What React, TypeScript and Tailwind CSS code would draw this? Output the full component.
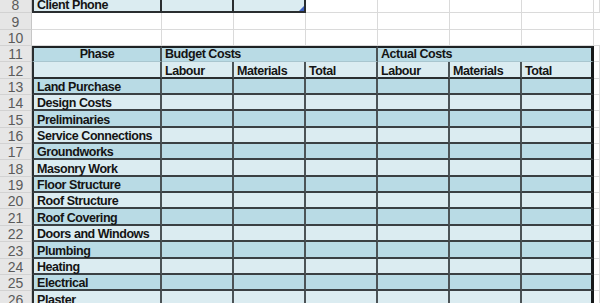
import React from "react";

const phases = [
  "Land Purchase",
  "Design Costs",
  "Preliminaries",
  "Service Connections",
  "Groundworks",
  "Masonry Work",
  "Floor Structure",
  "Roof Structure",
  "Roof Covering",
  "Doors and Windows",
  "Plumbing",
  "Heating",
  "Electrical",
  "Plaster",
];

const DARK = "bg-[#b9dbe5]";
const LIGHT = "bg-[#dbecf1]";

function RowHead({ n }: { n: number }) {
  return (
    <div className="flex w-[32px] shrink-0 items-end justify-center border-r border-b border-r-[#c6c6c6] border-b-[#d2d2d2] bg-[#e6e6e6] text-[14px] leading-[13px] font-normal tracking-normal text-[#5b5b5b]">
      {n}
    </div>
  );
}

function Blank({ w }: { w: string }) {
  return <div className={`${w} shrink-0 border-r border-b border-[#dadada] bg-white`} />;
}

function Row({ children }: { children: React.ReactNode }) {
  return <div className="flex h-[16.35px] shrink-0">{children}</div>;
}

export default function App() {
  const cols = ["w-[72px]", "w-[72px]", "w-[72px]", "w-[72px]", "w-[72px]", "w-[72px]"];
  return (
    <div className="h-[303px] w-[600px] overflow-hidden bg-white font-['Liberation_Sans',Arial,sans-serif] text-[12.5px] leading-[11px] font-bold tracking-[-0.45px] text-[#141414]">
      <div className="-mt-[3px] flex flex-col">
        {/* row 8 */}
        <Row>
          <RowHead n={8} />
          <div className={`flex w-[130px] shrink-0 items-end border-l-2 border-r-2 border-b-2 border-[#2a2e30] ${LIGHT} pl-[3px]`}>
            Client Phone
          </div>
          <div className={`w-[72px] shrink-0 border-r-2 border-b-2 border-[#2a2e30] ${LIGHT}`} />
          <div className={`relative w-[72px] shrink-0 border-r-2 border-b-2 border-[#2a2e30] ${LIGHT}`}>
            <svg className="absolute right-0 bottom-0" width="5" height="5" viewBox="0 0 5 5">
              <path d="M5 0 L5 5 L0 5 Z" fill="#3b5fc0" />
            </svg>
          </div>
          <Blank w="w-[72px]" />
          <Blank w="w-[72px]" />
          <Blank w="w-[72px]" />
          <Blank w="w-[72px]" />
          <Blank w="flex-1" />
        </Row>
        {/* rows 9-10 */}
        {[9, 10].map((n) => (
          <Row key={n}>
            <RowHead n={n} />
            <Blank w="w-[130px]" />
            {cols.concat(["w-[72px]"]).map((c, i) => (
              <Blank key={i} w={c} />
            ))}
            <Blank w="flex-1" />
          </Row>
        ))}
        {/* row 11 */}
        <Row>
          <RowHead n={11} />
          <div className={`flex w-[130px] shrink-0 items-end justify-center border-l-2 border-t-2 border-r-2 border-l-[#2a2e30] border-t-[#1e2224] border-r-[#4b5356] border-b border-b-[#a9c6cf] pb-[1px] ${DARK}`}>
            Phase
          </div>
          <div className={`flex w-[216px] shrink-0 items-end border-t-2 border-r-2 border-t-[#1e2224] border-r-[#4b5356] border-b border-b-[#a9c6cf] pb-[1px] pl-[3px] ${DARK}`}>
            Budget Costs
          </div>
          <div className={`flex w-[216px] shrink-0 items-end border-t-2 border-r-[3px] border-t-[#1e2224] border-r-[#151819] border-b border-b-[#a9c6cf] pb-[1px] pl-[3px] ${DARK}`}>
            Actual Costs
          </div>
          <Blank w="flex-1" />
        </Row>
        {/* row 12 */}
        <Row>
          <RowHead n={12} />
          <div className={`w-[130px] shrink-0 border-l-2 border-r-2 border-b-2 border-l-[#2a2e30] border-r-[#4b5356] border-b-[#2a2e30] ${LIGHT}`} />
          {["Labour", "Materials", "Total", "Labour", "Materials", "Total"].map((t, i) => (
            <div
              key={i}
              className={`flex w-[72px] shrink-0 items-end border-b-2 border-b-[#2a2e30] pl-[3px] ${LIGHT} ${
                i === 5 ? "border-r-[3px] border-r-[#151819]" : "border-r-2 border-r-[#4b5356]"
              }`}
            >
              {t}
            </div>
          ))}
          <Blank w="flex-1" />
        </Row>
        {/* data rows */}
        {phases.map((p, idx) => {
          const bg = idx % 2 === 0 ? DARK : LIGHT;
          return (
            <Row key={p}>
              <RowHead n={13 + idx} />
              <div className={`flex w-[130px] shrink-0 items-end border-l-2 border-r-2 border-b-2 border-l-[#2a2e30] border-r-[#4b5356] border-b-[#3a4043] pl-[3px] ${bg}`}>
                {p}
              </div>
              {cols.map((c, i) => (
                <div
                  key={i}
                  className={`${c} shrink-0 border-b-2 border-b-[#3a4043] ${bg} ${
                    i === 5 ? "border-r-[3px] border-r-[#151819]" : "border-r-2 border-r-[#4b5356]"
                  }`}
                />
              ))}
              <Blank w="flex-1" />
            </Row>
          );
        })}
      </div>
    </div>
  );
}
